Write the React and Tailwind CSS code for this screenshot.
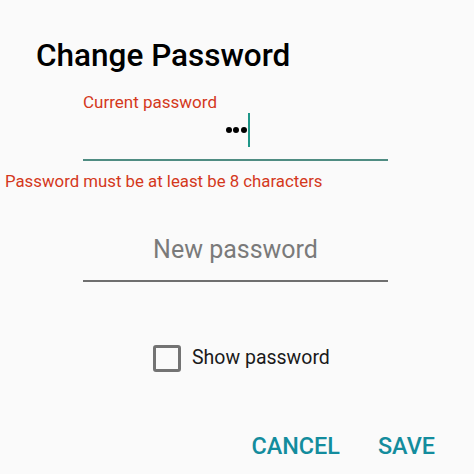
import React, { useState } from "react";

const App = () => {
  const [show, setShow] = useState(false);

  return (
    <div className="w-[474px] h-[474px] bg-[#fafafa] overflow-hidden font-['Roboto',sans-serif]">
      {/* Title */}
      <h1 className="pl-[36px] pt-[37px] text-[31.5px] leading-[37px] font-medium text-black">
        Change Password
      </h1>

      {/* Current password field */}
      <div className="ml-[83px] w-[305px] mt-[18px]">
        <div className="text-[17px] leading-[20px] text-[#d4381c]">Current password</div>
        <div className="h-[47px] flex items-start justify-center pt-[1px]">
          <div className="flex items-center h-[34px] ml-[4px]">
            <div className="flex items-center gap-[1.5px] mr-[1px]">
              <span className="w-[6px] h-[6px] rounded-full bg-black" />
              <span className="w-[6px] h-[6px] rounded-full bg-black" />
              <span className="w-[6px] h-[6px] rounded-full bg-black" />
            </div>
            <span className="w-[2px] h-[34px] bg-[#1e9688]" />
          </div>
        </div>
        <div className="h-[2px] bg-[#4f8c82]" />
      </div>

      {/* Error */}
      <div className="ml-[5px] mt-[10px] text-[16.8px] leading-[20px] text-[#d4381c]">
        Password must be at least be 8 characters
      </div>

      {/* New password field */}
      <div className="ml-[83px] w-[305px] mt-[44px]">
        <div className="text-[25px] leading-[30px] text-[#7a7a7a] text-center">New password</div>
        <div className="mt-[15px] h-[1.5px] bg-[#6f6f6f]" />
      </div>

      {/* Show password */}
      <label className="ml-[153px] mt-[63px] flex items-center gap-[11px] cursor-pointer w-fit">
        <span
          onClick={() => setShow(!show)}
          className="w-[28px] h-[27px] border-[3px] border-[#737373] rounded-[3px]"
        />
        <span className="text-[19.5px] leading-[24px] text-[#1a1a1a]">Show password</span>
      </label>

      {/* Actions */}
      <div className="mt-[60px] flex justify-end pr-[39px] gap-[38px] text-[23.4px] leading-[28px] font-medium text-[#138c9d]">
        <button>CANCEL</button>
        <button>SAVE</button>
      </div>
    </div>
  );
};

export default App;
